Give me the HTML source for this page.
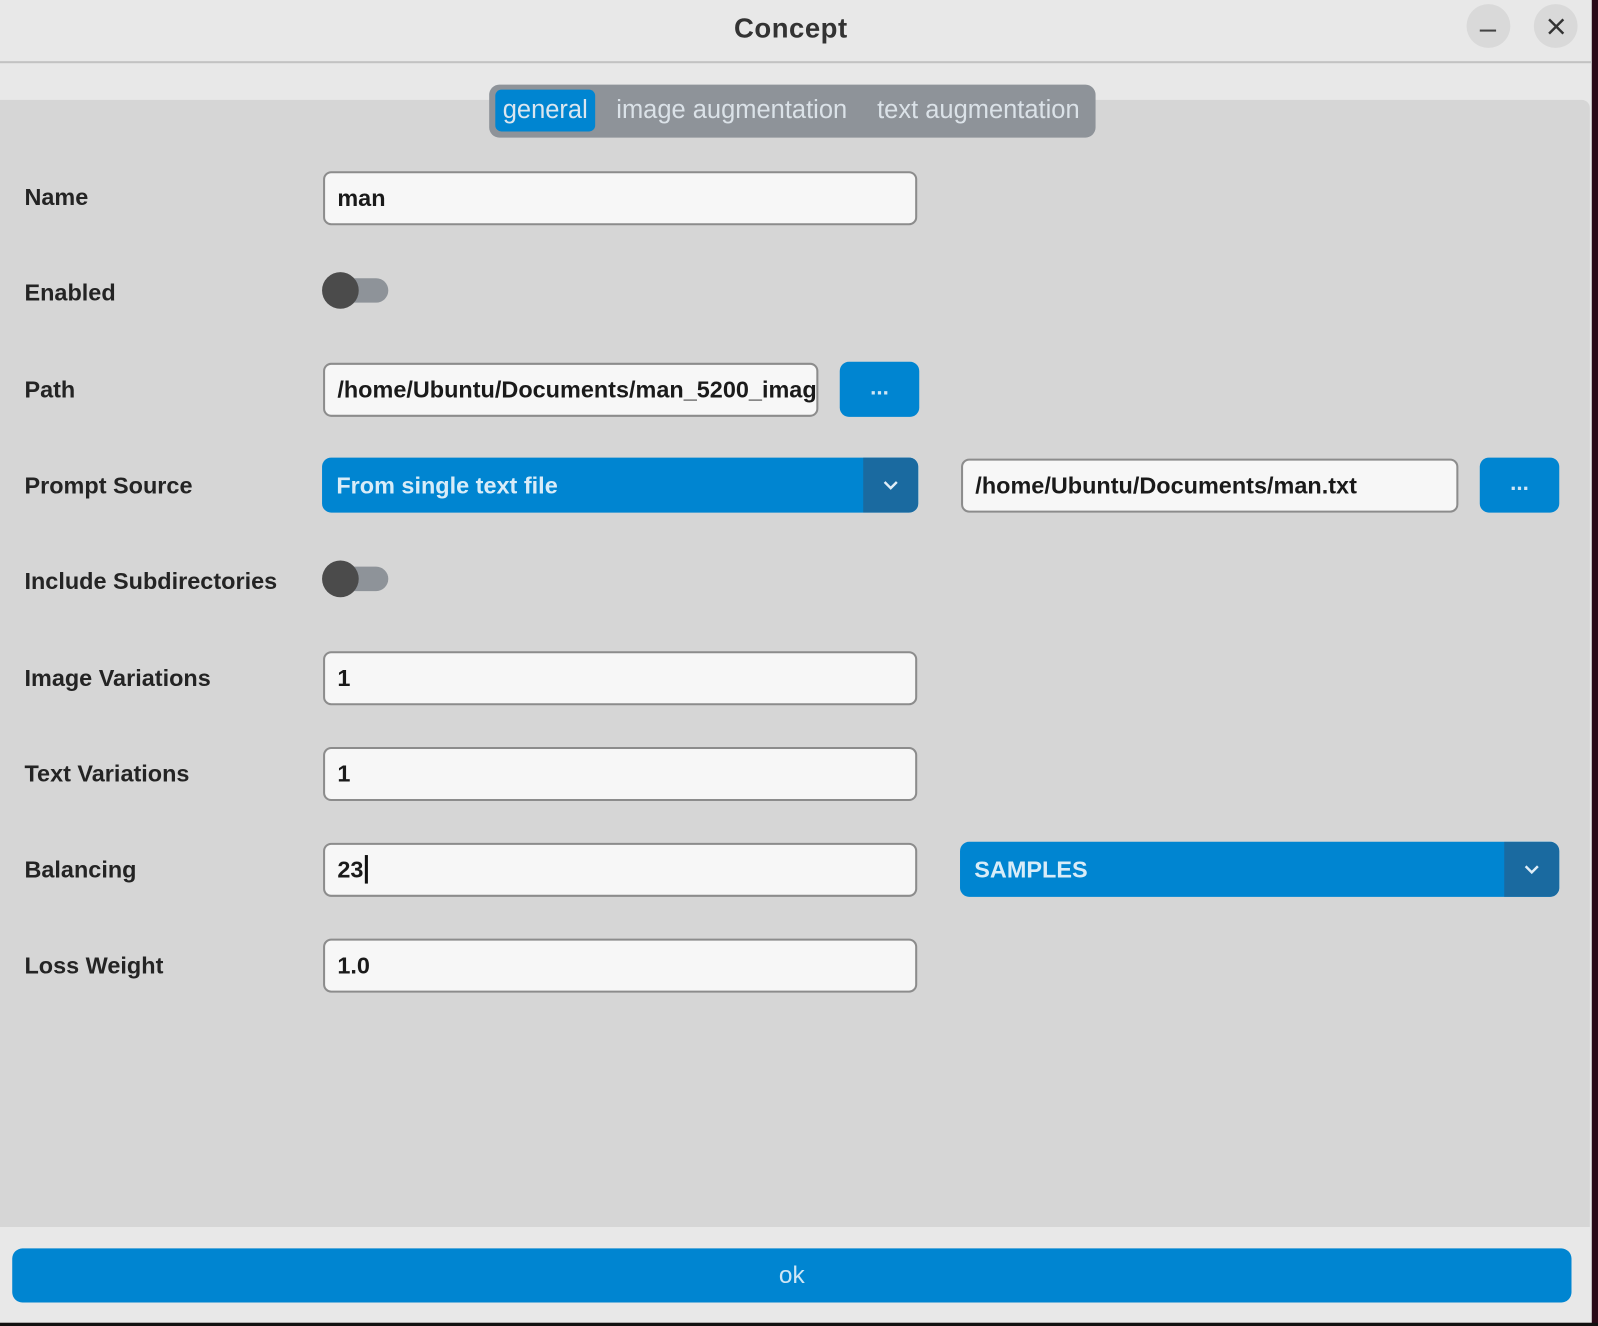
<!DOCTYPE html>
<html><head><meta charset="utf-8">
<style>
html,body{margin:0;padding:0;width:1598px;height:1326px;overflow:hidden;background:#1a0610;}
#w{position:absolute;left:0;top:0;width:1568px;height:1301px;transform:scale(1.01913);transform-origin:0 0;font-family:"Liberation Sans",sans-serif;}
.a{position:absolute;box-sizing:border-box;}
.lbl{position:absolute;left:24px;font-size:23px;font-weight:bold;color:#242424;letter-spacing:0px;line-height:28px;}
.inp{position:absolute;left:317px;width:583px;height:53px;box-sizing:border-box;background:#f7f7f7;border:2px solid #8c8c8c;border-radius:8px;font-size:23px;color:#1a1a1a;padding-left:12px;line-height:49px;letter-spacing:0px;white-space:nowrap;overflow:hidden;font-weight:bold;}
.btn{position:absolute;background:#0085d1;border-radius:9px;color:#cfe6f5;text-align:center;font-size:22px;font-weight:bold;box-sizing:border-box;}
.tog{position:absolute;left:316px;width:66px;height:36px;}
.tog .t{position:absolute;left:14px;top:6px;width:51px;height:24px;background:#8e9399;border-radius:12px;}
.tog .k{position:absolute;left:0;top:0;width:36px;height:36px;background:#4b4b4b;border-radius:50%;}
.dd{position:absolute;background:#0085d1;border-radius:9px;overflow:hidden;color:#d8ecf8;font-size:23px;font-weight:bold;letter-spacing:0px;}
.dd .ar{position:absolute;right:0;top:0;width:54px;height:100%;background:#1a6aa0;}
.tab{position:absolute;top:88px;height:41px;text-align:center;line-height:41px;font-size:25px;color:#dbe2e8;white-space:nowrap;}
</style></head><body>
<div id="w">
<div class="a" style="left:0;top:0;width:1562px;height:1298px;background:#e8e8e8;"></div>
<div class="a" style="left:1562px;top:0;width:6px;height:1301px;background:#2a0a18;"></div>
<div class="a" style="left:0;top:1298px;width:1568px;height:3px;background:#111;"></div>
<div class="a" style="left:0;top:60px;width:1562px;height:2px;background:#c2c2c2;"></div>
<div class="a" style="left:0;top:0;width:1552px;height:56px;text-align:center;font-size:27px;font-weight:bold;color:#333;line-height:56px;letter-spacing:0.5px;">Concept</div>
<div class="a" style="left:1439px;top:4px;width:43px;height:43px;border-radius:50%;background:#d9d9d9;"></div>
<div class="a" style="left:1452px;top:29px;width:16px;height:2px;background:#444;"></div>
<div class="a" style="left:1505px;top:4px;width:43px;height:43px;border-radius:50%;background:#d9d9d9;"></div>
<svg class="a" style="left:1517px;top:16px" width="20" height="20"><path d="M3 3L17 17M17 3L3 17" stroke="#333" stroke-width="2.4"/></svg>
<div class="a" style="left:0;top:98px;width:1560px;height:1106px;background:#d6d6d6;border-top-right-radius:8px;"></div>
<div class="a" style="left:480px;top:83px;width:595px;height:52px;background:#8e9399;border-radius:10px;"></div>
<div class="a" style="left:486px;top:88px;width:98px;height:41px;background:#0085d1;border-radius:6px;"></div>
<div class="tab" style="left:486px;width:98px;color:#dbe6ef;">general</div>
<div class="tab" style="left:592px;width:252px;">image augmentation</div>
<div class="tab" style="left:850px;width:220px;">text augmentation</div>

<div class="lbl" style="top:179px">Name</div>
<div class="inp" style="top:168px">man</div>
<div class="lbl" style="top:273px">Enabled</div>
<div class="tog" style="top:267px"><div class="t"></div><div class="k"></div></div>
<div class="lbl" style="top:368px">Path</div>
<div class="inp" style="top:356px;width:486px">/home/Ubuntu/Documents/man_5200_images</div>
<div class="btn" style="left:824px;top:355px;width:78px;height:54px;line-height:50px;">...</div>
<div class="lbl" style="top:462px">Prompt Source</div>
<div class="dd" style="left:316px;top:449px;width:585px;height:54px;"><div style="position:absolute;left:14px;top:0;line-height:54px;">From single text file</div><div class="ar"><svg style="position:absolute;left:19px;top:22px" width="16" height="10"><path d="M2 2L8 8L14 2" stroke="#e0eef8" stroke-width="2.4" fill="none"/></svg></div></div>
<div class="inp" style="left:943px;top:450px;width:488px">/home/Ubuntu/Documents/man.txt</div>
<div class="btn" style="left:1452px;top:449px;width:78px;height:54px;line-height:50px;">...</div>
<div class="lbl" style="top:556px">Include Subdirectories</div>
<div class="tog" style="top:550px"><div class="t"></div><div class="k"></div></div>
<div class="lbl" style="top:651px">Image Variations</div>
<div class="inp" style="top:639px">1</div>
<div class="lbl" style="top:745px">Text Variations</div>
<div class="inp" style="top:733px">1</div>
<div class="lbl" style="top:839px">Balancing</div>
<div class="inp" style="top:827px">23<span style="display:inline-block;width:3px;height:28px;background:#111;vertical-align:middle;margin-left:1px;margin-top:-4px"></span></div>
<div class="dd" style="left:942px;top:826px;width:588px;height:54px;"><div style="position:absolute;left:14px;top:0;line-height:54px;">SAMPLES</div><div class="ar"><svg style="position:absolute;left:19px;top:22px" width="16" height="10"><path d="M2 2L8 8L14 2" stroke="#e0eef8" stroke-width="2.4" fill="none"/></svg></div></div>
<div class="lbl" style="top:933px">Loss Weight</div>
<div class="inp" style="top:921px">1.0</div>

<div class="btn" style="left:12px;top:1225px;width:1530px;height:53px;line-height:53px;font-size:24px;font-weight:normal;border-radius:10px;">ok</div>
</div>
</body></html>
